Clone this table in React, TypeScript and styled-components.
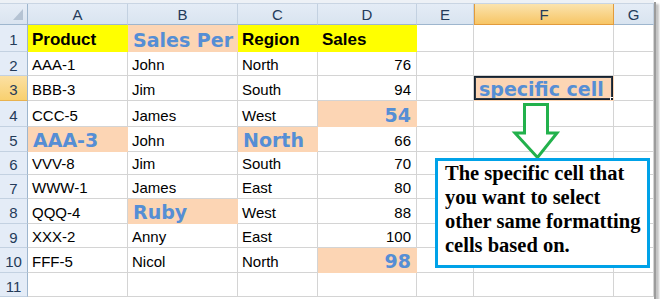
import React from 'react';
import styled, { createGlobalStyle, css } from 'styled-components';

const GlobalStyle = createGlobalStyle`
    html, body {
        margin: 0;
        padding: 0;
        background: #ffffff;
    }
`;

type Fill = 'yellow' | 'peach' | undefined;
type Kind = 'head' | 'hl' | 'text';

interface CellData {
    text?: string;
    fill?: Fill;
    kind?: Kind;
    right?: boolean;
}

const COLS = ['A', 'B', 'C', 'D', 'E', 'F', 'G'];
const ROW_HEIGHTS = [27, 24, 25, 26, 25, 23, 24, 25, 24, 25, 24];

const rows: CellData[][] = [
    [
        { text: 'Product', fill: 'yellow', kind: 'head' },
        { text: 'Sales Per', fill: 'peach', kind: 'hl' },
        { text: 'Region', fill: 'yellow', kind: 'head' },
        { text: 'Sales', fill: 'yellow', kind: 'head' },
    ],
    [{ text: 'AAA-1' }, { text: 'John' }, { text: 'North' }, { text: '76', right: true }],
    [{ text: 'BBB-3' }, { text: 'Jim' }, { text: 'South' }, { text: '94', right: true }],
    [{ text: 'CCC-5' }, { text: 'James' }, { text: 'West' }, { text: '54', right: true, fill: 'peach', kind: 'hl' }],
    [
        { text: 'AAA-3', fill: 'peach', kind: 'hl' },
        { text: 'John' },
        { text: 'North', fill: 'peach', kind: 'hl' },
        { text: '66', right: true },
    ],
    [{ text: 'VVV-8' }, { text: 'Jim' }, { text: 'South' }, { text: '70', right: true }],
    [{ text: 'WWW-1' }, { text: 'James' }, { text: 'East' }, { text: '80', right: true }],
    [{ text: 'QQQ-4' }, { text: 'Ruby', fill: 'peach', kind: 'hl' }, { text: 'West' }, { text: '88', right: true }],
    [{ text: 'XXX-2' }, { text: 'Anny' }, { text: 'East' }, { text: '100', right: true }],
    [{ text: 'FFF-5' }, { text: 'Nicol' }, { text: 'North' }, { text: '98', right: true, fill: 'peach', kind: 'hl' }],
    [],
];

const Frame = styled.div`
    position: relative;
    width: 654px;
    height: 299px;
    background: #ffffff;
    box-shadow: 2px 2px 0 #9c9c9c, 5px 4px 2px #c4c4c4;
`;

const TopStrip = styled.div`
    height: 3px;
    background: #edf1f6;
    border-bottom: 1px solid #c9d5e3;
`;

const Grid = styled.div`
    display: grid;
    grid-template-columns: 28px 100px 110px 80px 99px 57px 140px 40px;
    grid-template-rows: 21px ${ROW_HEIGHTS.map((h) => `${h}px`).join(' ')};
    overflow: hidden;
`;

const headerBase = css`
    box-sizing: border-box;
    display: flex;
    align-items: center;
    justify-content: center;
    font-family: 'Liberation Sans', Arial, sans-serif;
    font-size: 15px;
    color: #243b5a;
`;

const Corner = styled.div`
    ${headerBase};
    justify-content: flex-end;
    align-items: flex-end;
    padding: 0 4px 4px 0;
    background: linear-gradient(#e6edf6, #dae4f0);
    border-right: 1px solid #9eb6ce;
    border-bottom: 1px solid #9eb6ce;
`;

const CornerMark = styled.div`
    width: 10px;
    height: 11px;
    background: #b5c3d3;
    clip-path: polygon(100% 0, 100% 100%, 0 100%);
`;

const ColHead = styled.div<{ $active?: boolean }>`
    ${headerBase};
    background: ${(p) => (p.$active ? 'linear-gradient(#fbe3ae, #f7c565)' : 'linear-gradient(#e4ecf6, #d9e4f0)')};
    border-right: 1px solid ${(p) => (p.$active ? '#e29b3c' : '#c3d1e1')};
    border-left: ${(p) => (p.$active ? '1px solid #e29b3c' : '0')};
    border-bottom: 1px solid ${(p) => (p.$active ? '#e29b3c' : '#9eb6ce')};
    padding-top: 1px;
`;

const RowHead = styled.div<{ $active?: boolean }>`
    ${headerBase};
    background: ${(p) => (p.$active ? 'linear-gradient(#fbe0a3, #f8d06f)' : '#e4ecf7')};
    border-right: 1px solid #9eb6ce;
    border-bottom: 1px solid ${(p) => (p.$active ? '#e8b24f' : '#c3d1e1')};
    padding-top: 3px;
`;

const fills = {
    yellow: '#ffff00',
    peach: '#fcd5b4',
};

const Cell = styled.div<{ $fill?: Fill; $kind: Kind; $right?: boolean }>`
    position: relative;
    box-sizing: border-box;
    display: flex;
    align-items: flex-end;
    justify-content: ${(p) => (p.$right ? 'flex-end' : 'flex-start')};
    padding: 0 5px 2px 4px;
    overflow: hidden;
    white-space: nowrap;
    background: ${(p) => (p.$fill ? fills[p.$fill] : '#ffffff')};
    border-right: 1px solid ${(p) => (p.$fill ? fills[p.$fill] : '#d4d4d4')};
    border-bottom: 1px solid ${(p) => (p.$fill ? fills[p.$fill] : '#d4d4d4')};
    color: #000000;
    font-family: 'Liberation Sans', Arial, sans-serif;
    font-size: 15px;
    ${(p) =>
        p.$kind === 'head' &&
        css`
            font-weight: bold;
            font-size: 17px;
            padding-bottom: 1px;
        `}
    ${(p) =>
        p.$kind === 'hl' &&
        css`
            font-family: 'DejaVu Sans', Verdana, sans-serif;
            font-weight: bold;
            font-size: 19px;
            color: #558ed5;
            padding-bottom: 0;
            padding-left: 5px;
        `}
`;

const Selection = styled.div`
    position: absolute;
    inset: -1px;
    border: 2px solid #15202c;
    box-shadow: inset 0 0 0 1px #2c3846;
    pointer-events: none;
`;

const Handle = styled.div`
    position: absolute;
    right: -4px;
    bottom: -4px;
    width: 5px;
    height: 5px;
    background: #15202c;
    border: 1px solid #ffffff;
`;

const Callout = styled.div`
    position: absolute;
    left: 435px;
    top: 158px;
    width: 215px;
    height: 110px;
    box-sizing: border-box;
    border: 3px solid #00a2e8;
    padding: 0 6px 0 7px;
    background: #ffffff;
    font-family: 'Liberation Serif', 'Times New Roman', serif;
    font-weight: bold;
    font-size: 20.5px;
    line-height: 24px;
    color: #000000;
`;

const ArrowSvg = styled.svg`
    position: absolute;
    left: 510px;
    top: 100px;
`;

const Arrow = () => (
    <ArrowSvg width="52" height="62" viewBox="0 0 52 62">
        <polygon
            points="14.5,4.5 37.5,4.5 37.5,33 47,33 27.5,57.5 5,33 14.5,33"
            fill="#ffffff"
            stroke="#22b14c"
            strokeWidth="3"
        />
    </ArrowSvg>
);

const App = () => {
    return (
        <>
            <GlobalStyle />
            <Frame>
                <TopStrip />
                <Grid>
                    <Corner>
                        <CornerMark />
                    </Corner>
                    {COLS.map((c) => (
                        <ColHead key={c} $active={c === 'F'}>
                            {c}
                        </ColHead>
                    ))}
                    {ROW_HEIGHTS.map((_, r) => {
                        const data = rows[r] || [];
                        return (
                            <React.Fragment key={r}>
                                <RowHead $active={r === 2}>{r + 1}</RowHead>
                                {COLS.map((c, ci) => {
                                    const d = data[ci];
                                    if (r === 2 && c === 'F') {
                                        // the selected cell
                                        return (
                                            <Cell key={c} $fill="peach" $kind="hl">
                                                specific cell
                                                <Selection />
                                                <Handle />
                                            </Cell>
                                        );
                                    }
                                    return (
                                        <Cell key={c} $fill={d?.fill} $kind={d?.kind || 'text'} $right={d?.right}>
                                            {d?.text}
                                        </Cell>
                                    );
                                })}
                            </React.Fragment>
                        );
                    })}
                </Grid>
                <Arrow />
                <Callout>
                    The specific cell that
                    <br />
                    you want to select
                    <br />
                    other same formatting
                    <br />
                    cells based on.
                </Callout>
            </Frame>
        </>
    );
};

export default App;
